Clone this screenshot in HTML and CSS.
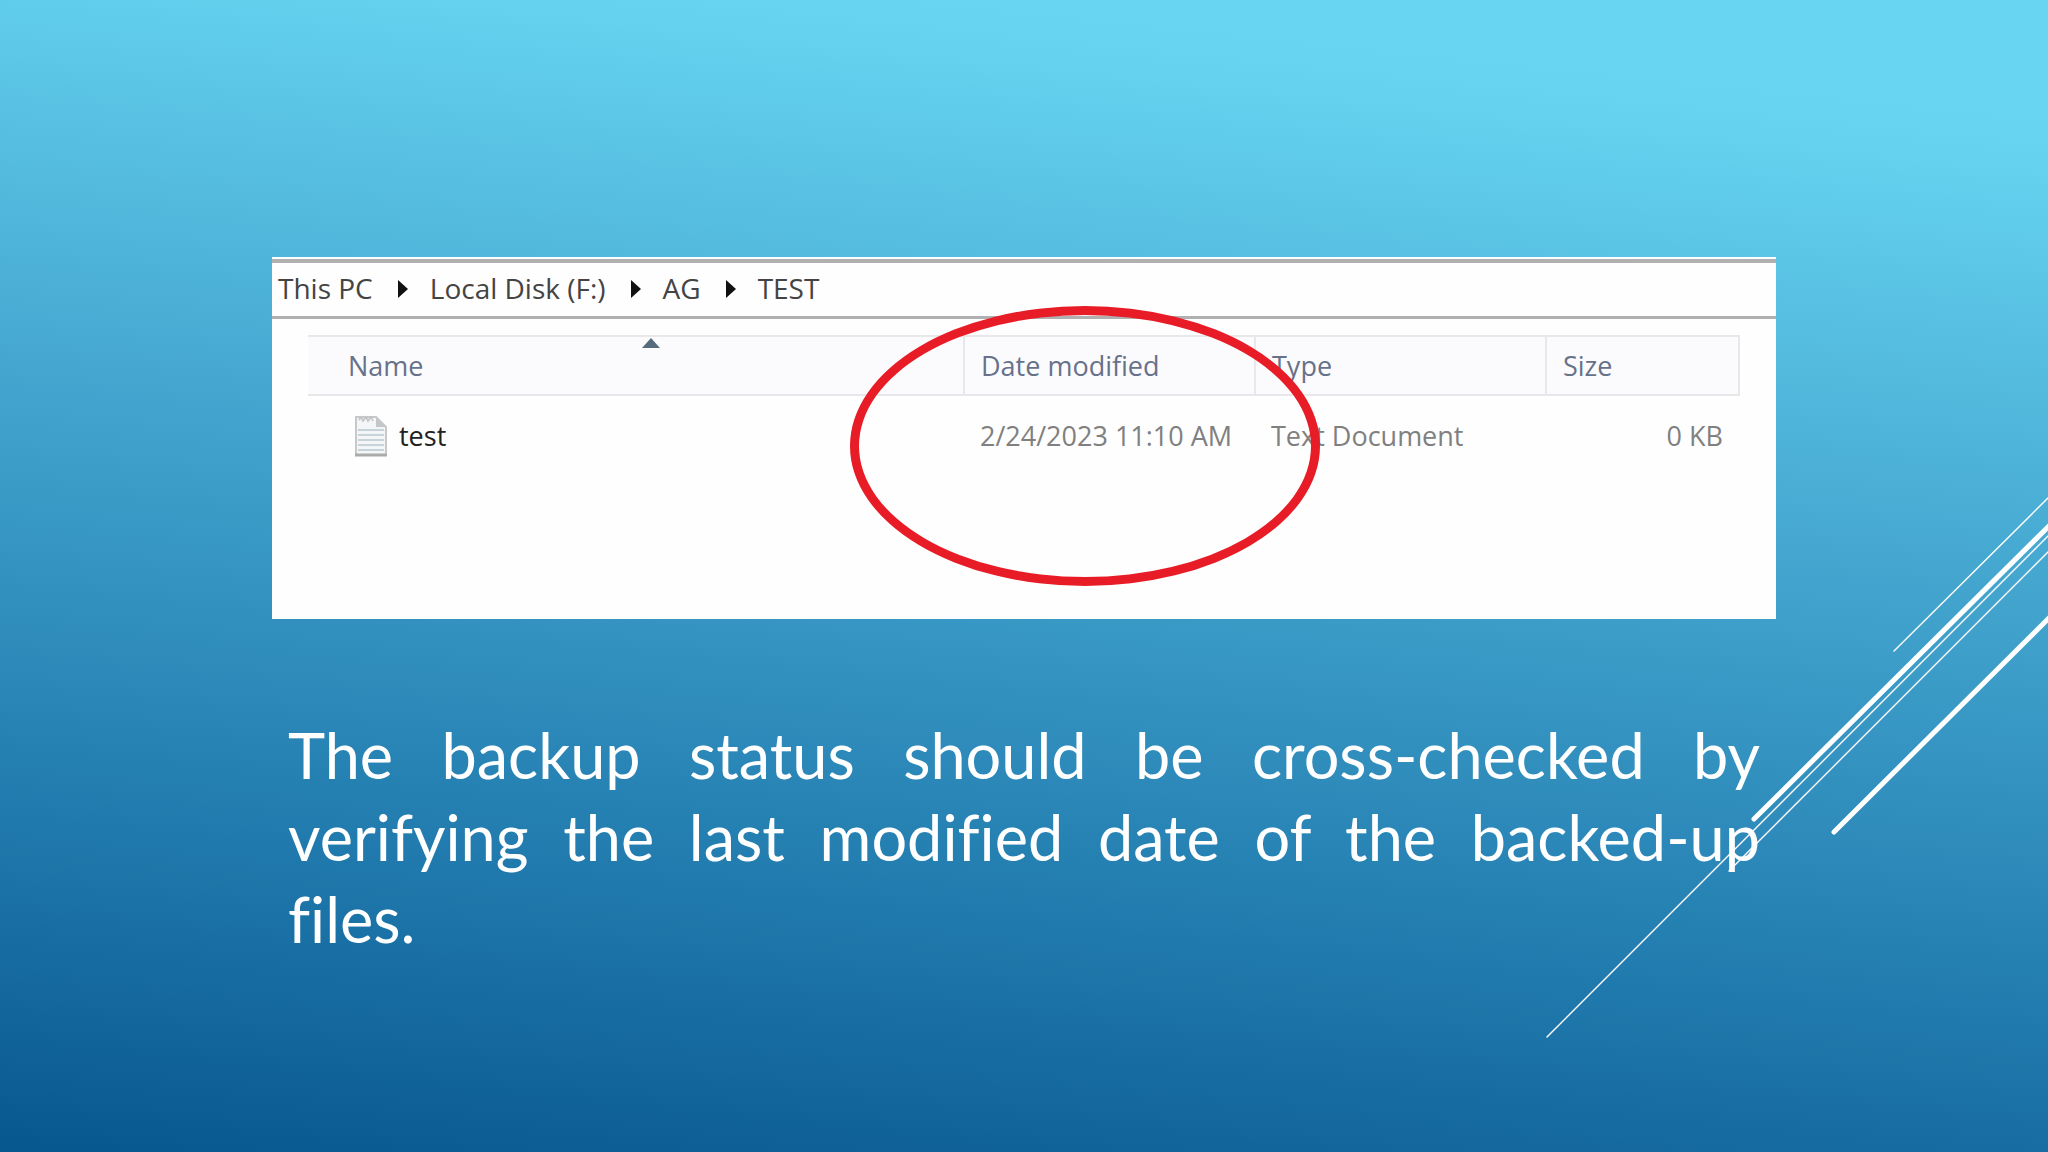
FILE: index.html
```html
<!DOCTYPE html>
<html lang="en">
  <head>
    <meta charset="UTF-8" />
    <meta name="viewport" content="width=device-width, initial-scale=1.0" />
    <title>Backup status</title>
    <link rel="stylesheet" href="styles.css">
  </head>
  <body>
    <main class="slide">
      <!-- Decorative diagonal lines -->
      <svg class="slide-lines" viewBox="0 0 2048 1152" preserveAspectRatio="xMaxYMid slice" aria-hidden="true">
        <g stroke="#fff" stroke-linecap="round">
          <path d="M1894 651 2050 496" stroke-width="1.4" />
          <path d="M1754 819 2052 523" stroke-width="5" />
          <path d="M1547 1037 2050 534" stroke-width="1.4" />
          <path d="M1729 871 2050 550" stroke-width="1.4" />
          <path d="M1834 832 2052 615" stroke-width="5" />
        </g>
      </svg>

      <div class="content">
        <section class="explorer">
          <nav class="breadcrumb" aria-label="Path">
            <a href="#">This PC</a>
            <span class="arrow"></span>
            <a href="#">Local Disk (F:)</a>
            <span class="arrow"></span>
            <a href="#">AG</a>
            <span class="arrow"></span>
            <a href="#">TEST</a>
          </nav>

          <table class="files">
            <thead>
              <tr>
                <th class="col-name">Name<span class="sort-arrow"></span></th>
                <th class="col-date">Date modified</th>
                <th class="col-type">Type</th>
                <th class="col-size">Size</th>
              </tr>
            </thead>
            <tbody>
              <tr>
                <td>
                  <div class="file-name">
                    <svg class="file-icon" width="32" height="42" viewBox="0 0 32 42" aria-hidden="true">
                      <path d="M1 2h20l10 10v28H1z" fill="#f3f5f6" stroke="#c6c8ca" stroke-width="2" />
                      <path d="M21 2v10h10z" fill="#c4c7c9" />
                      <path d="M4 5l2-3 2 4 3-4 2 4 3-4 2 4" fill="none" stroke="#c0c2c4" stroke-width="1.5" />
                      <path d="M3 15h26M3 20h26M3 25h26M3 30h26M3 35h26" stroke="#c6d3d8" stroke-width="2" />
                      <path d="M0 40h32" stroke="#aaa" stroke-width="3" />
                    </svg>
                    test
                  </div>
                </td>
                <td>2/24/2023 11:10 AM</td>
                <td>Text Document</td>
                <td class="size">0 KB</td>
              </tr>
            </tbody>
          </table>

          <div class="highlight"></div>
        </section>

        <p class="caption">The backup status should be cross-checked by verifying the last modified date of the backed-up files.</p>
      </div>
    </main>
  </body>
</html>
```
FILE: styles.css
```css
* {
  box-sizing: border-box;
}
body {
  margin: 0;
  font-family: "Open Sans", "Noto Sans", sans-serif;
}
.slide {
  position: relative;
  min-height: 100vh;
  overflow: hidden;
  background: linear-gradient(186deg, #68d6f3 0%, #67d5f2 10%, #47aad2 40%, #2681b3 70%, #07578f 100%);
}
.slide-lines {
  position: absolute;
  inset: 0;
  width: 100%;
  height: 100%;
}
.content {
  position: relative;
  width: 1504px;
  max-width: 90%;
  margin: 0 auto;
  padding-top: 257px;
}

/* Explorer window */
.explorer {
  position: relative;
  min-height: 362px;
  padding-top: 2px;
  background: #fefefe;
}
.breadcrumb {
  display: flex;
  align-items: center;
  height: 60px;
  padding: 0 6px 4px;
  border-top: 4px solid #b0b0b0;
  border-bottom: 3px solid #b0b0b0;
  font-size: 28px;
}
.breadcrumb a {
  color: #444;
  text-decoration: none;
}
.arrow {
  margin: 2px 22px 0 25px;
  border-left: 10px solid #111;
  border-top: 9px solid transparent;
  border-bottom: 9px solid transparent;
}

.files {
  width: calc(100% - 72px);
  margin: 16px 36px 0;
  border-collapse: collapse;
  table-layout: fixed;
  font-size: 27px;
  color: #808080;
}
.files th {
  position: relative;
  height: 59px;
  padding: 0 16px;
  border: 2px solid #e8e8ea;
  background: #fbfbfd;
  color: #68718a;
  font-weight: normal;
  text-align: left;
}
.files td {
  height: 80px;
  padding: 0 16px;
}
.files .col-name {
  width: 656px;
  padding-left: 40px;
  border-left: none;
}
.files .col-date,
.files .col-type {
  width: 291px;
}
.sort-arrow {
  position: absolute;
  top: 1px;
  left: 51%;
  border-bottom: 10px solid #566b7c;
  border-left: 9px solid transparent;
  border-right: 9px solid transparent;
}
.file-name {
  display: flex;
  align-items: center;
  gap: 12px;
  padding-left: 31px;
  color: #222;
}
.files .size {
  text-align: right;
}

/* Red ellipse around the date */
.highlight {
  position: absolute;
  top: 49px;
  left: 578px;
  width: 470px;
  height: 280px;
  border: 9px solid #e81c26;
  border-radius: 50%;
}

.caption {
  margin: 95px 0 0;
  padding: 0 16px;
  color: #fff;
  font-family: Lato, sans-serif;
  font-size: 63px;
  font-variant-ligatures: none;
  line-height: 82px;
  text-align: justify;
}
```
